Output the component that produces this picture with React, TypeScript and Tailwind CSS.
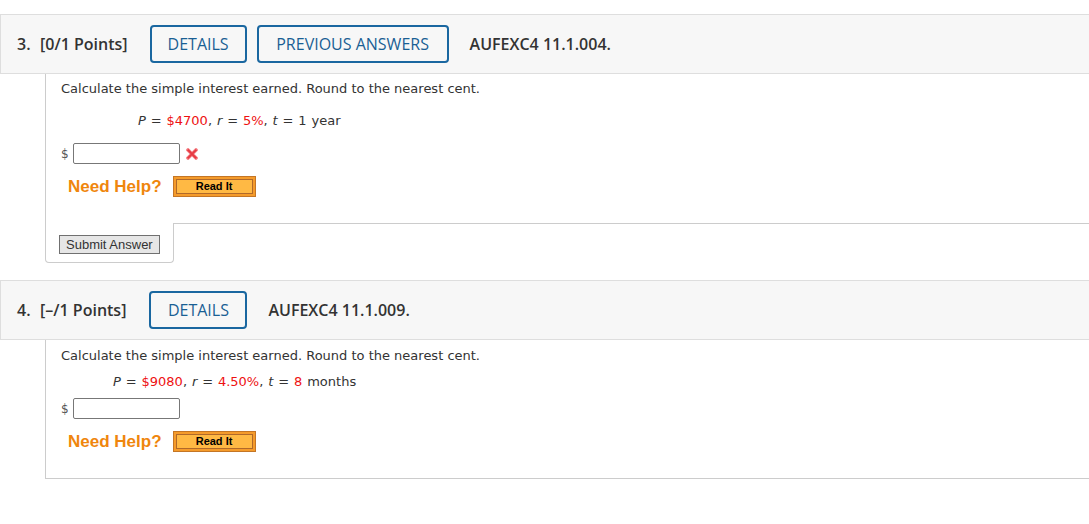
import React from "react";

function RedX() {
  return (
    <svg width="12" height="12" viewBox="0 0 12 12" className="block">
      <path d="M2 2 L10 10 M10 2 L2 10" stroke="#f68a8f" strokeWidth="3.6" strokeLinecap="square" />
      <path d="M2.3 2.3 L9.7 9.7 M9.7 2.3 L2.3 9.7" stroke="#e63a43" strokeWidth="2" strokeLinecap="square" />
    </svg>
  );
}

function ReadIt() {
  return (
    <div className="w-[83px] h-[21px] bg-[#f59b2b] border border-[#c47626] p-[2px]">
      <div className="h-full border border-[#b0692a] bg-[#ffb944] flex items-center justify-center text-[11px] font-bold text-black leading-none" style={{ fontFamily: '"Liberation Sans", Arial, sans-serif' }}>
        Read It
      </div>
    </div>
  );
}

function Header({ num, points, buttons, code, gap }: { num: string; points: string; buttons: { label: string; w: string }[]; code: string; gap: string }) {
  return (
    <div className="h-[60px] bg-[#f7f7f7] border-y border-l border-[#dedede] flex items-center pl-[16px] text-[#333]" style={{ fontFamily: '"Open Sans", sans-serif' }}>
      <span className="text-[16px] font-semibold w-[23px]">{num}</span>
      <span className="text-[16px] font-semibold">{points}</span>
      <div className={`flex gap-[10px] ${gap}`}>
        {buttons.map((b) => (
          <div key={b.label} className={`${b.w} h-[38px] border-2 border-[#1a67a0] rounded-[4px] flex items-center justify-center text-[#1a5f94] text-[16px]`}>
            {b.label}
          </div>
        ))}
      </div>
      <span className="ml-[21px] text-[16px] font-semibold">{code}</span>
    </div>
  );
}

const verd = { fontFamily: '"DejaVu Sans", Verdana, sans-serif' };
const arial = { fontFamily: '"Liberation Sans", Arial, sans-serif' };

function AnswerRow({ x }: { x?: boolean }) {
  return (
    <div className="flex items-center h-[21px]">
      <span className="text-[12px] text-[#555] w-[12px]" style={verd}>$</span>
      <div className="w-[107px] h-[21px] border border-[#777] rounded-[2px] bg-white" />
      {x && <div className="ml-[6px]"><RedX /></div>}
    </div>
  );
}

function NeedHelp() {
  return (
    <div className="flex items-center ml-[7px]">
      <span className="text-[17px] font-bold text-[#ef860d]" style={arial}>Need Help?</span>
      <div className="ml-[11px]"><ReadIt /></div>
    </div>
  );
}

export default function App() {
  return (
    <div className="w-[1089px] h-[524px] bg-white overflow-hidden pt-[14px]">
      <Header
        num="3."
        points="[0/1 Points]"
        gap="ml-[22px]"
        buttons={[
          { label: "DETAILS", w: "w-[97px]" },
          { label: "PREVIOUS ANSWERS", w: "w-[192px]" },
        ]}
        code="AUFEXC4 11.1.004."
      />
      <div className="ml-[45px] border-l border-[#cccccc] pl-[15px] pt-[7px] h-[149px] text-[#333]" style={verd}>
        <p className="text-[13px] leading-[16px]">Calculate the simple interest earned. Round to the nearest cent.</p>
        <p className="text-[13px] leading-[16px] mt-[16px] ml-[77px] [word-spacing:0.75px]">
          <i>P</i> = <span className="text-[#ee1111]">$4700</span>, <i>r</i> = <span className="text-[#ee1111]">5%</span>, <i>t</i> = 1 year
        </p>
        <div className="mt-[14px]"><AnswerRow x /></div>
        <div className="mt-[10px]"><NeedHelp /></div>
      </div>
      <div className="flex ml-[45px]">
        <div className="w-[129px] h-[40px] border-l border-r border-b border-[#cccccc] rounded-b-[4px] flex items-start pt-[12px] pl-[13px]">
          <div className="h-[19px] px-[6px] bg-[#e6e6e6] border border-[#707070] text-[13px] text-[#333] leading-[17px]" style={arial}>Submit Answer</div>
        </div>
        <div className="flex-1 border-t border-[#cccccc]" />
      </div>
      <div className="h-[17px]" />
      <Header
        num="4."
        points="[–/1 Points]"
        gap="ml-[23px]"
        buttons={[{ label: "DETAILS", w: "w-[98px]" }]}
        code="AUFEXC4 11.1.009."
      />
      <div className="ml-[45px] border-l border-b border-[#cccccc] pl-[15px] pt-[8px] h-[139px] text-[#333]" style={verd}>
        <p className="text-[13px] leading-[16px]">Calculate the simple interest earned. Round to the nearest cent.</p>
        <p className="text-[13px] leading-[16px] mt-[10px] ml-[52px] [word-spacing:0.75px]">
          <i>P</i> = <span className="text-[#ee1111]">$9080</span>, <i>r</i> = <span className="text-[#ee1111]">4.50%</span>, <i>t</i> = <span className="text-[#ee1111]">8</span> months
        </p>
        <div className="mt-[8px]"><AnswerRow /></div>
        <div className="mt-[10px]"><NeedHelp /></div>
      </div>
    </div>
  );
}
